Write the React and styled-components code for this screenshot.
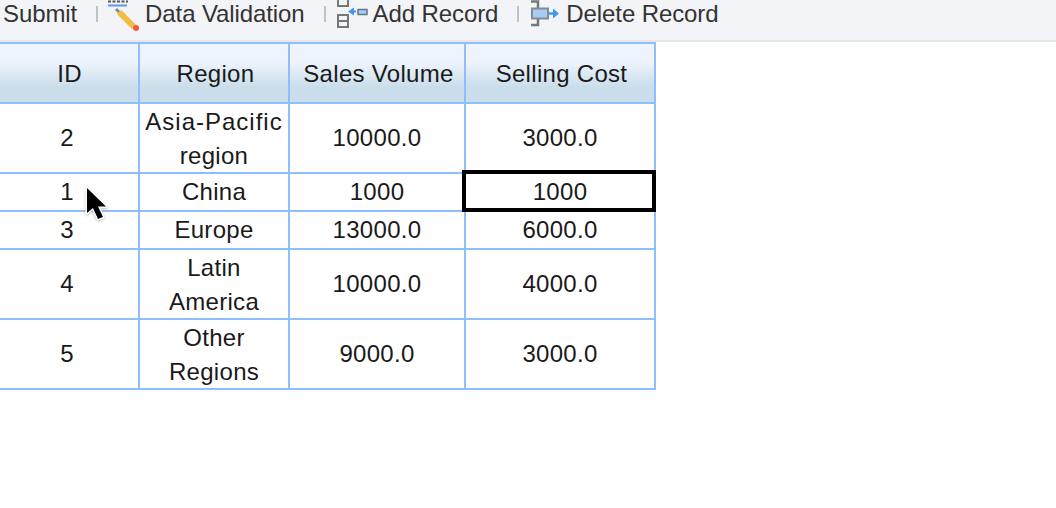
import React from "react";
import styled, { createGlobalStyle } from "styled-components";

const Global = createGlobalStyle`
  html, body { margin: 0; padding: 0; background: #fff; overflow: hidden; }
  body { font-family: "Liberation Sans", Arial, sans-serif; }
`;

const Page = styled.div`
  position: relative;
  width: 1056px;
  height: 508px;
  overflow: hidden;
`;

const Toolbar = styled.div`
  display: flex;
  align-items: center;
  height: 42px;
  box-sizing: border-box;
  padding: 0 0 13px 3px;
  background: #f3f4f8;
  border-bottom: 2px solid #e6e7ea;
  color: #333;
  font-size: 24px;
  letter-spacing: -0.1px;
  overflow: hidden;
`;

const ToolLabel = styled.span`
  white-space: nowrap;
  line-height: 28px;
  margin-left: ${p => p.$gap || 0}px;
`;

const Separator = styled.i`
  display: block;
  flex: none;
  width: 2px;
  height: 16px;
  background: #c2c2c2;
  margin-left: 19px;
  margin-right: ${p => p.$right}px;
`;

const ToolIcon = styled.svg`
  display: block;
  flex: none;
  overflow: visible;
`;

const Grid = styled.table`
  border-collapse: separate;
  border-spacing: 0;
  table-layout: fixed;
  width: 656px;
  font-size: 24px;
  letter-spacing: 0.3px;
  color: #1a1a1a;
`;

const HeadCell = styled.th`
  height: 56px;
  padding: 2px 0 0 3px;
  box-sizing: content-box;
  font-weight: 400;
  text-align: center;
  white-space: nowrap;
  border-top: 2px solid #8ebffa;
  border-right: 2px solid #8ebffa;
  border-bottom: 2px solid #8ebffa;
  background: linear-gradient(180deg, #eff5fe 0%, #edf3fc 32%, #c9deea 75%, #c9deea 100%);

  &:first-child {
    padding-left: 1px;
  }
`;

const Cell = styled.td`
  position: relative;
  height: ${p => (p.$multi ? 68 : 36)}px;
  padding: 0;
  box-sizing: content-box;
  text-align: center;
  line-height: 34px;
  border-right: 2px solid #8ebffa;
  border-bottom: 2px solid #8ebffa;

  &:first-child {
    padding-right: 4px;
  }
`;

const TwoLines = styled.div`
  margin: 1px 0 -1px;
`;

const WideText = styled.span`
  letter-spacing: 1px;
`;

const Selection = styled.span`
  position: absolute;
  left: -4px;
  right: -2px;
  top: -4px;
  bottom: -2px;
  border: 4px solid #000;
  box-sizing: border-box;
  pointer-events: none;
`;

const Pointer = styled.svg`
  position: absolute;
  left: 84px;
  top: 185px;
  filter: drop-shadow(0 1px 1px rgba(0, 0, 0, 0.25));
`;

const rows = [
  { multi: true, cells: ["2", <TwoLines><WideText>Asia-Pacific</WideText><br />region</TwoLines>, "10000.0", "3000.0"] },
  { cells: ["1", "China", "1000", "1000"], selected: true },
  { cells: ["3", "Europe", "13000.0", "6000.0"] },
  { multi: true, cells: ["4", <TwoLines>Latin<br />America</TwoLines>, "10000.0", "4000.0"] },
  { multi: true, cells: ["5", <TwoLines>Other<br />Regions</TwoLines>, "9000.0", "3000.0"] },
];

const PencilIcon = () => (
  <ToolIcon width="32" height="32" viewBox="0 0 32 32">
    <path d="M0 3.500h3M4.500 3.500h3M9 3.500h3M13.500 3.500h3M18 3.500h2" stroke="#555" strokeWidth="2" />
    <path d="M0 7.500h19" stroke="#5a9be8" strokeWidth="2" />
    <path d="M11 14l15 15" stroke="#f4bb45" strokeWidth="6" />
    <path d="M8 11l3 3" stroke="#8a8a8a" strokeWidth="3" />
    <circle cx="28" cy="30" r="3" fill="#ee5a3a" />
  </ToolIcon>
);

const AddIcon = () => (
  <ToolIcon width="34" height="32" viewBox="0 0 34 32">
    <g fill="none" stroke="#777" strokeWidth="2">
      <path d="M1 -2h10v10H1z" />
      <path d="M1 17h10v12H1z" />
      <path d="M1 23h10" />
    </g>
    <path d="M11 13.500l6-4v8z" fill="#3f97ee" />
    <path d="M16 12.500h3v2h-3z" fill="#3f97ee" />
    <rect x="21" y="11.500" width="9" height="5" fill="#a9cdf2" stroke="#66778a" strokeWidth="1.500" />
  </ToolIcon>
);

const DeleteIcon = () => (
  <ToolIcon width="34" height="32" viewBox="0 0 34 32">
    <g fill="none" stroke="#777" strokeWidth="2.500">
      <path d="M0 3.500h7v7" />
      <path d="M7 20.500v6.500h-7" />
    </g>
    <rect x="1" y="10.500" width="16" height="10" fill="#a9cdf2" stroke="#808a96" strokeWidth="2" />
    <path d="M18 15.500h6" stroke="#3f97ee" strokeWidth="2.500" />
    <path d="M22 10.500l6 5-6 5z" fill="#3f97ee" />
  </ToolIcon>
);

export default function App() {
  return (
    <Page>
      <Global />
      <Toolbar>
        <ToolLabel>Submit</ToolLabel>
        <Separator $right={10} />
        <PencilIcon />
        <ToolLabel $gap={5}>Data Validation</ToolLabel>
        <Separator $right={11} />
        <AddIcon />
        <ToolLabel $gap={2}>Add Record</ToolLabel>
        <Separator $right={12} />
        <DeleteIcon />
        <ToolLabel $gap={1}>Delete Record</ToolLabel>
      </Toolbar>
      <Grid>
        <colgroup>
          <col style={{ width: 140 }} />
          <col style={{ width: 150 }} />
          <col style={{ width: 176 }} />
          <col style={{ width: 190 }} />
        </colgroup>
        <thead>
          <tr>
            {["ID", "Region", "Sales Volume", "Selling Cost"].map(t => (
              <HeadCell key={t}>{t}</HeadCell>
            ))}
          </tr>
        </thead>
        <tbody>
          {rows.map((r, i) => (
            <tr key={i}>
              {r.cells.map((c, j) => (
                <Cell key={j} $multi={r.multi}>
                  {c}
                  {r.selected && j === 3 && <Selection />}
                </Cell>
              ))}
            </tr>
          ))}
        </tbody>
      </Grid>
      <Pointer width="26" height="38" viewBox="0 0 26 38">
        <path
          d="M3 3v25l6-5 5 11 5-2-5-10.500h8z"
          fill="#000"
          stroke="#fff"
          strokeWidth="3"
          strokeLinejoin="round"
          paintOrder="stroke"
        />
      </Pointer>
    </Page>
  );
}
